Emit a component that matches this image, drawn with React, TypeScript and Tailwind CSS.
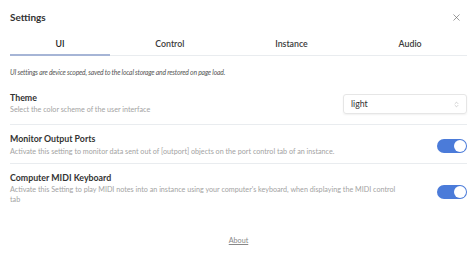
import React, { useState } from 'react';
import { X, ChevronsUpDown } from 'lucide-react';

const tabs = ['UI', 'Control', 'Instance', 'Audio'];

const Toggle = ({ on, className = '' }: { on: boolean; className?: string }) => (
  <button
    className={`relative inline-flex h-[14px] w-[30px] shrink-0 items-center rounded-full ${on ? 'bg-[#4b7bd9]' : 'bg-gray-300'} ${className}`}
  >
    <span className={`inline-block h-[12px] w-[12px] rounded-full bg-white ${on ? 'translate-x-[17px]' : 'translate-x-px'}`} />
  </button>
);

export default function App() {
  const [active, setActive] = useState('UI');

  return (
    <div className="w-[474px] h-[255px] bg-white text-[#333] font-['Lato','Liberation_Sans',sans-serif] overflow-hidden">
      {/* Header */}
      <div className="flex items-center justify-between pl-[10px] pr-[12px] h-[34px]">
        <h2 className="text-[10px] font-bold leading-none">Settings</h2>
        <X size={11} strokeWidth={1.4} className="text-[#666]" />
      </div>

      {/* Tabs */}
      <div className="ml-[10px] mr-[7px] flex border-b border-[#e9ecef]">
        {tabs.map(t => (
          <button
            key={t}
            onClick={() => setActive(t)}
            className={`flex-auto h-[22px] -mb-px text-[8.8px] font-semibold leading-none border-b-2 ${active === t ? 'border-[#a6b5d6] text-[#222]' : 'border-transparent text-[#3a3a3a]'}`}
          >
            {t}
          </button>
        ))}
      </div>

      <div className="ml-[10px] mr-[7px]">
        <p className="mt-[11px] text-[6.8px] tracking-[-0.2px] italic text-[#555] leading-[10px]">
          UI settings are device scoped, saved to the local storage and restored on page load.
        </p>

        {/* Theme */}
        <div className="mt-[16px] flex items-center justify-between pb-[9px] border-b border-[#e9ecef]">
          <div>
            <div className="text-[8.8px] font-bold leading-[10px]">Theme</div>
            <div className="mt-[2px] text-[7.2px] text-[#a3a3a3] leading-[10px]">Select the color scheme of the user interface</div>
          </div>
          <div className="w-[124px] h-[20px] flex items-center justify-between pl-[7px] pr-[6px] rounded-[3px] border border-[#e6e6e6] shadow-[0_1px_2px_rgba(0,0,0,0.06)]">
            <span className="text-[8.8px] text-[#333] leading-none">light</span>
            <ChevronsUpDown size={7} strokeWidth={1.5} className="text-[#999]" />
          </div>
        </div>

        {/* Monitor Output Ports */}
        <div className="flex items-center justify-between pt-[9px] pb-[6px] border-b border-[#e9ecef]">
          <div>
            <div className="text-[8.8px] font-bold leading-[10px]">Monitor Output Ports</div>
            <div className="mt-[3px] text-[7.2px] text-[#a3a3a3] leading-[10px]">
              Activate this setting to monitor data sent out of [outport] objects on the port control tab of an instance.
            </div>
          </div>
          <Toggle on />
        </div>

        {/* Computer MIDI Keyboard */}
        <div className="flex items-center justify-between pt-[9px]">
          <div className="w-[396px]">
            <div className="text-[8.8px] font-bold leading-[10px]">Computer MIDI Keyboard</div>
            <div className="mt-[2px] text-[7.2px] text-[#a3a3a3] leading-[10px]">
              Activate this Setting to play MIDI notes into an instance using your computer's keyboard, when displaying the MIDI control tab
            </div>
          </div>
          <Toggle on className="translate-y-[3px]" />
        </div>

        <div className="mt-[31px] flex justify-center">
          <a className="text-[7.2px] text-[#888] underline leading-[10px]">About</a>
        </div>
      </div>
    </div>
  );
}
